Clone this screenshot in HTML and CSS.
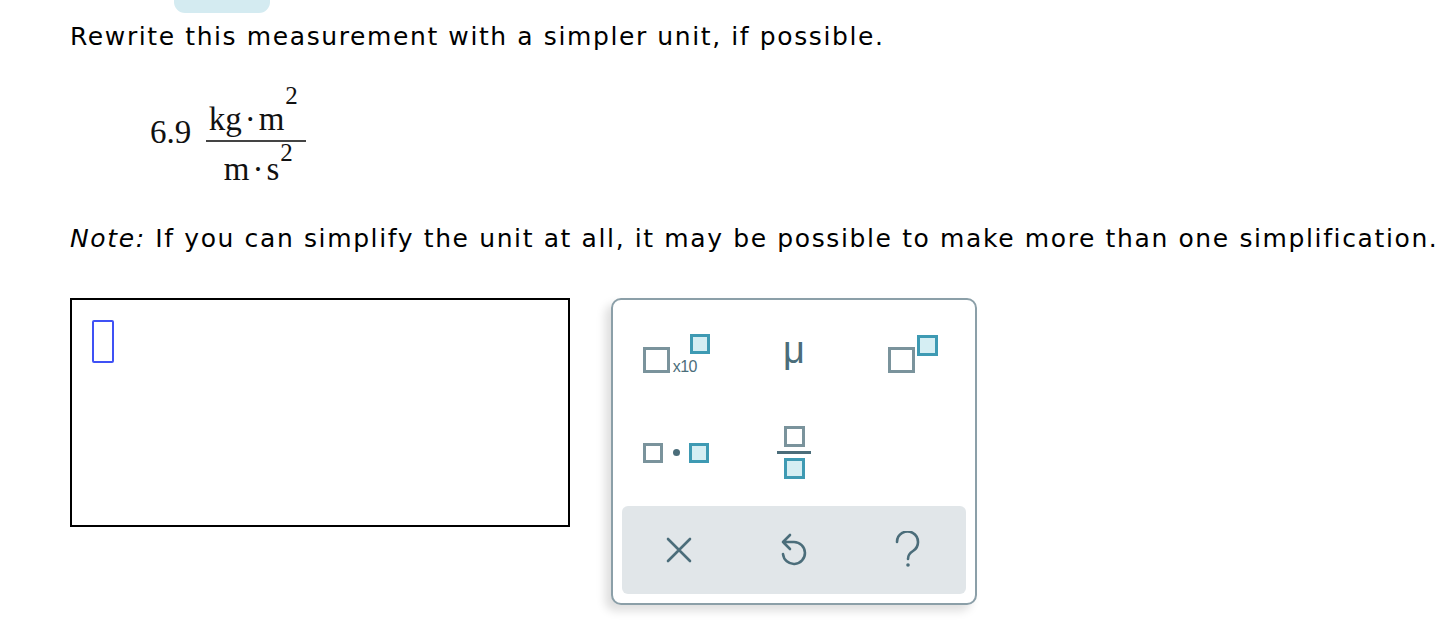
FILE: index.html
```html
<!DOCTYPE html>
<html>
<head>
<meta charset="utf-8">
<link rel="stylesheet" href="styles.css">
</head>
<body>
<div class="page">
  <div class="tab"></div>
  <p class="prompt">Rewrite this measurement with a simpler unit, if possible.</p>
  <div class="expr">
    <span class="num-val">6.9</span>
    <span class="frac">
      <span class="frac-num"><span class="unit">kg<span class="cdot">·</span>m</span><span class="sup sup-top">2</span></span>
      <span class="frac-bar"></span>
      <span class="frac-den"><span class="unit">m<span class="cdot">·</span>s</span><span class="sup sup-bot">2</span></span>
    </span>
  </div>
  <p class="note"><em>Note:</em> If you can simplify the unit at all, it may be possible to make more than one simplification.</p>
  <div class="work">
    <div class="answer"><span class="cursor"></span></div>
    <div class="keypad">
      <div class="keys">
        <div class="key">
          <span class="ic-x10"><span class="box gray b27"></span><span class="x10">x10</span><span class="box blue b20 up"></span></span>
        </div>
        <div class="key"><span class="mu">μ</span></div>
        <div class="key">
          <span class="ic-sup"><span class="box gray b27"></span><span class="box blue b21 up"></span></span>
        </div>
        <div class="key">
          <span class="ic-dot"><span class="box gray b20"></span><span class="dot"></span><span class="box blue b20"></span></span>
        </div>
        <div class="key">
          <span class="ic-frac"><span class="box gray b21"></span><span class="fbar"></span><span class="box blue b21"></span></span>
        </div>
        <div class="key"></div>
      </div>
      <div class="bar">
        <div class="bkey">
          <svg width="26" height="26" viewBox="0 0 26 26"><path d="M2 2 L24 24 M24 2 L2 24" fill="none" stroke="#4b6d7a" stroke-width="2.6" stroke-linecap="round"/></svg>
        </div>
        <div class="bkey">
          <svg width="30" height="38" viewBox="0 0 30 38"><path d="M11 4 L4 11 L11 18 M4 11 L15 11 A11 11 0 1 1 4 23" fill="none" stroke="#4b6d7a" stroke-width="2.6" stroke-linecap="round" stroke-linejoin="round"/></svg>
        </div>
        <div class="bkey">
          <svg width="30" height="38" viewBox="0 0 30 38"><path d="M3 11 A10.5 10.5 0 1 1 19 20 Q14 23 14 28" fill="none" stroke="#4b6d7a" stroke-width="2.6" stroke-linecap="round"/><circle cx="14" cy="34" r="1.8" fill="#4b6d7a"/></svg>
        </div>
      </div>
    </div>
  </div>
</div>
</body>
</html>
```

FILE: styles.css
```css
* { box-sizing: border-box; }
html, body { margin: 0; padding: 0; background: #fff; }
body { font-family: "DejaVu Sans", Verdana, sans-serif; color: #000; }

.page { padding-left: 70px; width: 1452px; height: 630px; overflow: hidden; }

.tab {
  margin-left: 104px;
  width: 96px;
  height: 13px;
  background: #d4ebf1;
  border-radius: 0 0 11px 11px;
}

.prompt {
  margin: 9px 0 0;
  font-size: 25px;
  line-height: 30px;
  letter-spacing: 1.6px;
  white-space: nowrap;
}

.expr {
  display: flex;
  align-items: flex-start;
  margin-left: 80px;
  margin-top: 28px;
  font-family: "Liberation Serif", "Times New Roman", serif;
  color: #111;
}
.num-val {
  font-size: 33px;
  line-height: 34px;
  padding-top: 35px;
  margin-right: 15px;
}
.frac { display: flex; flex-direction: column; align-items: center; width: 100px; }
.frac-num, .frac-den { display: flex; align-items: flex-start; }
.frac-num { margin-right: 6px; }
.frac-den { margin-left: 4px; }
.unit { font-family: "Liberation Serif", "Times New Roman", serif; font-size: 33px; line-height: 34px; }
.frac-num .unit { padding-top: 22px; }
.frac-den .unit { padding-top: 10px; }
.cdot { margin: 0 3px; }
.sup { font-family: "Liberation Serif", "Times New Roman", serif; font-size: 25px; line-height: 24px; margin-left: 1px; }
.sup-top { margin-top: 4px; }
.sup-bot { margin-top: -1px; }
.frac-bar { width: 100px; height: 2px; background: #444; margin-top: 4px; }

.note {
  margin: 38px 0 0;
  font-size: 25px;
  line-height: 30px;
  letter-spacing: 1.62px;
  white-space: nowrap;
}

.work { display: flex; align-items: flex-start; gap: 41px; margin-top: 44px; }

.answer {
  width: 500px;
  height: 229px;
  border: 2px solid #000;
  padding: 20px 0 0 20px;
}
.cursor {
  display: block;
  width: 22px;
  height: 43px;
  border: 2.5px solid #3f51f5;
  border-radius: 2px;
}

.keypad {
  width: 366px;
  height: 307px;
  border: 2px solid #8b9fa8;
  border-radius: 10px;
  box-shadow: -6px 6px 10px rgba(0, 0, 0, 0.13);
  padding: 4px 9px 9px 9px;
  background: #fff;
}
.keys {
  display: grid;
  grid-template-columns: repeat(3, 1fr);
  grid-template-rows: 99px 99px;
}
.key { display: flex; align-items: center; justify-content: center; }

.box { display: block; border-width: 3px; border-style: solid; }
.gray { border-color: #7a939c; background: #fff; }
.blue { border-color: #3e9ab3; background: #d5eef3; }
.b27 { width: 27px; height: 26px; }
.b20 { width: 20px; height: 20px; }
.b21 { width: 21px; height: 21px; }
.up { align-self: flex-start; }

.ic-x10 { display: flex; align-items: flex-end; height: 39px; margin-left: -6px; }
.x10 {
  font-family: "Liberation Sans", Arial, sans-serif;
  font-size: 16px;
  line-height: 14px;
  color: #4b6d7a;
  margin-left: 3px;
  margin-bottom: -1px;
  letter-spacing: -0.6px;
}
.ic-x10 .blue { margin-left: -7px; }

.mu {
  font-family: "Liberation Sans", Arial, sans-serif;
  font-size: 38px;
  line-height: 38px;
  color: #4b6d7a;
  margin-bottom: 7px;
}

.ic-sup { display: flex; align-items: flex-end; height: 38px; gap: 2px; margin-left: 9px; }

.ic-dot { display: flex; align-items: center; margin-left: -6px; }
.dot { width: 7px; height: 7px; border-radius: 50%; background: #4b6d7a; margin: 0 9px 0 10px; }

.ic-frac { display: flex; flex-direction: column; align-items: center; margin-left: 1px; }
.fbar { width: 34px; height: 3px; background: #4b6d7a; margin: 4px 0 4px; }

.bar {
  display: grid;
  grid-template-columns: repeat(3, 1fr);
  height: 88px;
  margin-top: 4px;
  background: #e1e6e9;
  border-radius: 6px;
}
.bkey { display: flex; align-items: center; justify-content: center; }
.bkey svg { display: block; }
```
